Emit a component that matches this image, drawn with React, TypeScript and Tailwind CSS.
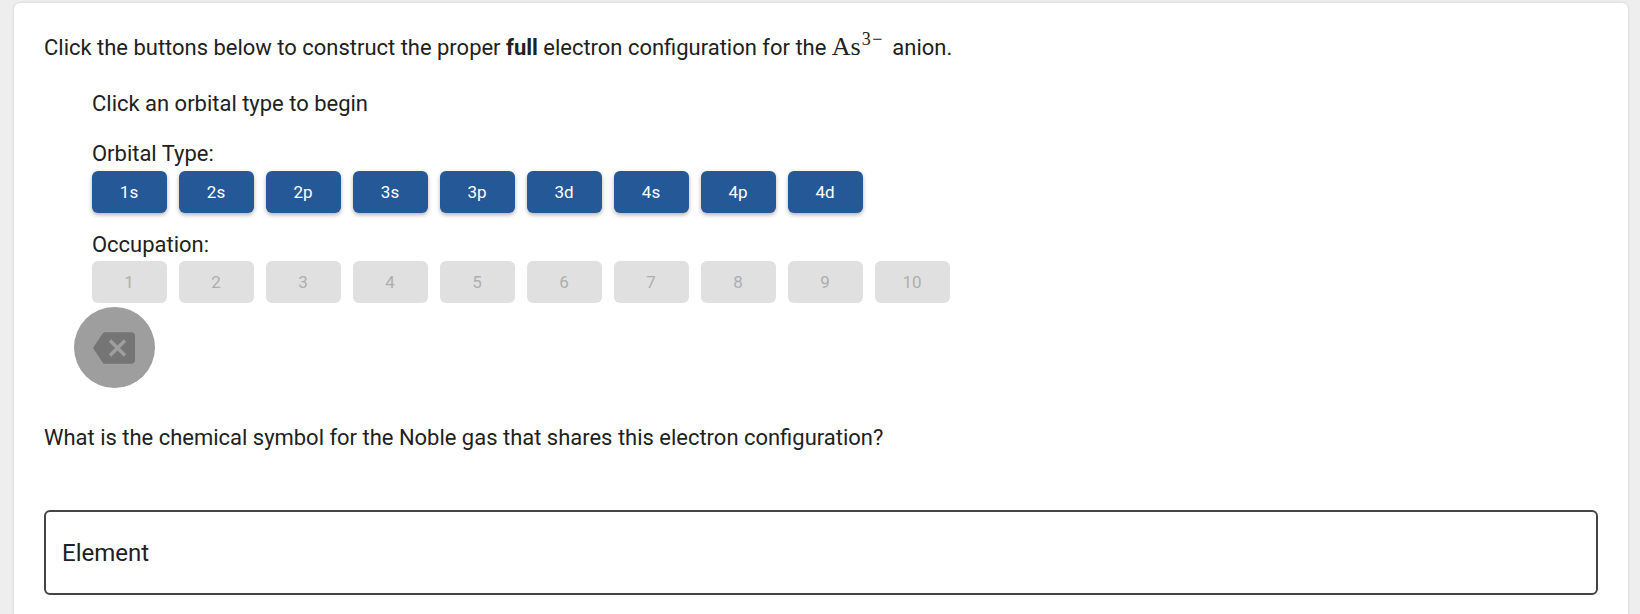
export default function App() {
  const orbitals = ["1s", "2s", "2p", "3s", "3p", "3d", "4s", "4p", "4d"];
  const occupations = ["1", "2", "3", "4", "5", "6", "7", "8", "9", "10"];
  return (
    <div className="h-[614px] overflow-hidden bg-[#eeeeee] pl-[14px] pr-[12px] pt-[3px] font-['Roboto',sans-serif] text-[21.97px] leading-[30px] text-[#212121]">
      <div className="h-[640px] rounded-[6px] bg-white px-[30px] pt-[29px] shadow-[0_0_3px_rgba(0,0,0,0.15)]">
        <p className="h-[31px]">
          Click the buttons below to construct the proper <b className="font-bold">full</b> electron configuration for the{" "}
          <span className="font-['Liberation_Serif',serif] text-[26px]">
            As<sup className="top-[-10px] ml-[1px] mr-[3px] text-[18px] leading-none tracking-[1.5px]">3−</sup>
          </span>{" "}
          anion.
        </p>
        <div className="ml-[48px] mt-[26px]">
          <p>Click an orbital type to begin</p>
          <p className="mt-[20px] h-[32px]">Orbital Type:</p>
          <div className="flex gap-[12px]">
            {orbitals.map((o) => (
              <button
                key={o}
                className="h-[42px] w-[75px] rounded-[6px] bg-[#255897] pr-[1px] text-[17px] text-white shadow-[0_2px_4px_rgba(0,0,0,0.3)]"
              >
                {o}
              </button>
            ))}
          </div>
          <p className="mt-[17px] h-[31px]">Occupation:</p>
          <div className="flex gap-[12px]">
            {occupations.map((o) => (
              <button
                key={o}
                disabled
                className="h-[42px] w-[75px] rounded-[6px] bg-[#e0e0e0] pr-[1px] text-[17px] text-[#aeaeae]"
              >
                {o}
              </button>
            ))}
          </div>
          <button className="ml-[-18px] mt-[4px] flex h-[81px] w-[81px] items-center justify-center rounded-full bg-[#9e9e9e]">
            <svg viewBox="0 0 24 24" className="mr-[2px] h-[42px] w-[42px] fill-[#757575]">
              <path d="M22 3H7c-.69 0-1.23.35-1.59.88L0 12l5.41 8.11c.36.53.9.89 1.59.89h15c1.1 0 2-.9 2-2V5c0-1.1-.9-2-2-2zm-3 12.59L17.59 17 14 13.41 10.41 17 9 15.59 12.59 12 9 8.41 10.41 7 14 10.59 17.59 7 19 8.41 15.41 12 19 15.59z" />
            </svg>
          </button>
        </div>
        <p className="mt-[35px]">What is the chemical symbol for the Noble gas that shares this electron configuration?</p>
        <div className="mt-[57px] flex h-[85px] items-center rounded-[6px] border-2 border-[#444444] px-[16px] text-[24px]">
          Element
        </div>
      </div>
    </div>
  );
}
